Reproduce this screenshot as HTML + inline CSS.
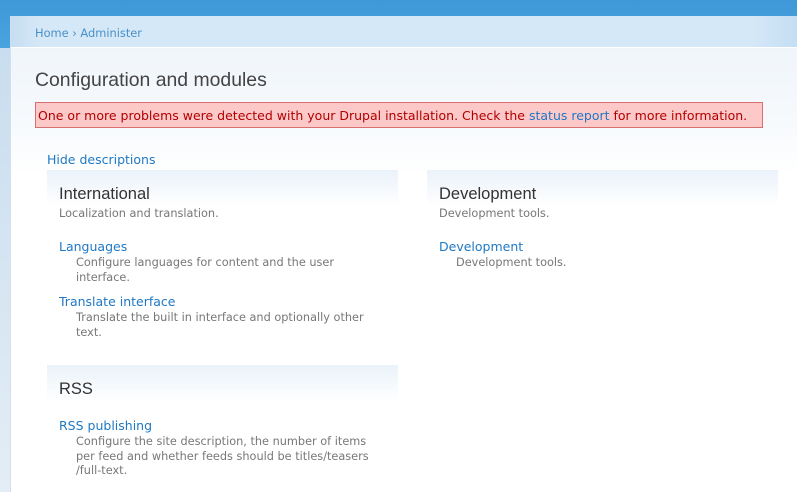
<!DOCTYPE html>
<html><head><style>
*{margin:0;padding:0;box-sizing:border-box}
body{width:797px;height:492px;overflow:hidden;background:#f0f4f8;font-family:"DejaVu Sans",Verdana,sans-serif;position:relative}
.top{position:absolute;left:0;top:0;width:797px;height:48px;background:linear-gradient(#3f98d8,#48a4de)}
.leftbg{position:absolute;left:0;top:48px;width:10px;height:444px;background:linear-gradient(#c8ddef,#e4edf5)}
.card{position:absolute;left:10px;top:16px;width:787px;height:476px;background:linear-gradient(#edf3f9 0,#f7fafd 110px,#fff 160px);border-left:1px solid #d0e0ee}
.crumb{height:32px;background:linear-gradient(90deg,#c6def2 0,#d5e8f7 30px,#d5e8f7 740px,#c4def3);border-bottom:1px solid #fff;font-size:11.4px;color:#4a90c8;padding:10px 0 0 24px}
h1{position:absolute;left:24px;top:53px;font:19.4px "Liberation Sans",Arial,sans-serif;color:#444}
.err{position:absolute;left:24px;top:86px;width:728px;height:26px;background:#fdc8c8;border:1px solid #d97070;color:#b00000;font-size:12.5px;padding:5px 0 0 2px;white-space:nowrap}
a{color:#1f78c4;text-decoration:none}
.hide{position:absolute;left:36px;top:136px;font-size:12.5px}
.panel{position:absolute;width:351px}
.ph{height:36px;background:linear-gradient(#eaf2fa,#fff);padding:15px 0 0 12px;font:16.5px "Liberation Sans",Arial,sans-serif;color:#333}
.pd{font-size:11.3px;color:#777;padding:1px 0 0 12px}
.item{padding:0 0 0 12px}
.item a{font-size:12.5px;display:block}
.item p{font-size:11.3px;color:#777;padding-left:17px;line-height:14.5px;width:317px;margin-top:2px}
</style></head><body>
<div class="top"></div><div class="leftbg"></div>
<div class="card">
<div class="crumb">Home › Administer</div>
<h1>Configuration and modules</h1>
<div class="err">One or more problems were detected with your Drupal installation. Check the <a href="#">status report</a> for more information.</div>
<a class="hide" href="#">Hide descriptions</a>
<div class="panel" style="left:36px;top:154px">
<div class="ph">International</div>
<div class="pd">Localization and translation.</div>
<div class="item" style="margin-top:19px"><a href="#">Languages</a><p>Configure languages for content and the user interface.</p></div>
<div class="item" style="margin-top:9px"><a href="#">Translate interface</a><p>Translate the built in interface and optionally other text.</p></div>
</div>
<div class="panel" style="left:416px;top:154px">
<div class="ph">Development</div>
<div class="pd">Development tools.</div>
<div class="item" style="margin-top:19px"><a href="#">Development</a><p>Development tools.</p></div>
</div>
<div class="panel" style="left:36px;top:349px">
<div class="ph">RSS</div>
<div class="item" style="margin-top:17px"><a href="#">RSS publishing</a><p>Configure the site description, the number of items per feed and whether feeds should be titles/teasers /full-text.</p></div>
</div>
</div>
</body></html>
